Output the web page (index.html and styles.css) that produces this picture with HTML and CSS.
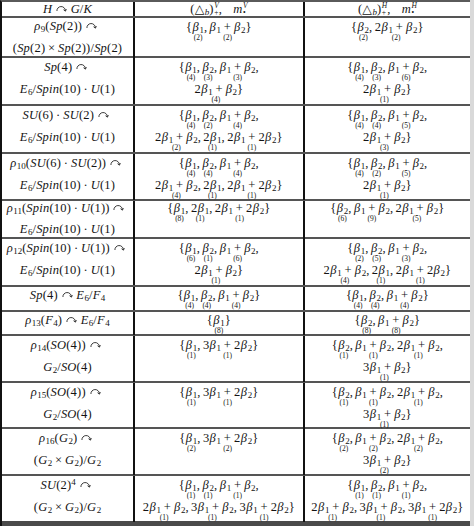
FILE: index.html
```html
<!DOCTYPE html>
<html lang="en">
<head>
<meta charset="utf-8">
<title>Table</title>
<link rel="stylesheet" href="styles.css">
</head>
<body>
<div class="tbl">

<div class="row h16">
  <div class="cell hd"><span class="e"><i>H</i><svg class="arr" viewBox="0 0 12 7"><path d="M1 6.5 A4.6 4.6 0 0 1 10.2 6"/><path d="M8.2 5.1 L10.3 6.7 L11.3 4.4"/></svg><i>G</i>/<i>K</i></span></div>
  <div class="cell hd c2"><span class="e">(△<sub><i>b</i></sub>)<span class="ss"><span class="sp"><i>V</i></span><span class="sb">+</span></span>,<span class="quad"></span><i>m</i><span class="ss"><span class="sp"><i>V</i></span><span class="sb">•</span></span></span></div>
  <div class="cell hd c3"><span class="e">(△<sub><i>b</i></sub>)<span class="ss"><span class="sp"><i>H</i></span><span class="sb">+</span></span>,<span class="quad"></span><i>m</i><span class="ss"><span class="sp"><i>H</i></span><span class="sb">•</span></span></span></div>
</div>

<!-- rho9 -->
<div class="row h40 short">
  <div class="cell">
    <div class="l"><span class="e"><i>ρ</i><sub>9</sub>(<i>Sp</i>(2))<svg class="arr" viewBox="0 0 12 7"><path d="M1 6.5 A4.6 4.6 0 0 1 10.2 6"/><path d="M8.2 5.1 L10.3 6.7 L11.3 4.4"/></svg></span></div>
    <div class="l"><span class="e">(<i>Sp</i>(2)<span class="b">×</span><i>Sp</i>(2))/<i>Sp</i>(2)</span></div>
  </div>
  <div class="cell c2">
    <div class="l"><span class="p">{</span><span class="u"><span class="e"><i>β</i><sub>1</sub></span><span class="m">(2)</span></span><span class="p c">,</span><span class="u"><span class="e"><i>β</i><sub>1</sub><span class="b">+</span><i>β</i><sub>2</sub></span><span class="m">(2)</span></span><span class="p">}</span></div>
  </div>
  <div class="cell c3">
    <div class="l"><span class="p">{</span><span class="u"><span class="e"><i>β</i><sub>2</sub></span><span class="m">(2)</span></span><span class="p c">,</span><span class="u"><span class="e">2<i>β</i><sub>1</sub><span class="b">+</span><i>β</i><sub>2</sub></span><span class="m">(2)</span></span><span class="p">}</span></div>
  </div>
</div>

<!-- Sp(4) -->
<div class="row h48">
  <div class="cell">
    <div class="l"><span class="e"><i>Sp</i>(4)<svg class="arr" viewBox="0 0 12 7"><path d="M1 6.5 A4.6 4.6 0 0 1 10.2 6"/><path d="M8.2 5.1 L10.3 6.7 L11.3 4.4"/></svg></span></div>
    <div class="l"><span class="e"><i>E</i><sub>6</sub>/<i>Spin</i>(10)<span class="b">·</span><i>U</i>(1)</span></div>
  </div>
  <div class="cell c2">
    <div class="l"><span class="p">{</span><span class="u"><span class="e"><i>β</i><sub>1</sub></span><span class="m">(4)</span></span><span class="p c">,</span><span class="u"><span class="e"><i>β</i><sub>2</sub></span><span class="m">(3)</span></span><span class="p c">,</span><span class="u"><span class="e"><i>β</i><sub>1</sub><span class="b">+</span><i>β</i><sub>2</sub></span><span class="m">(3)</span></span><span class="p">,</span></div>
    <div class="l"><span class="u"><span class="e">2<i>β</i><sub>1</sub><span class="b">+</span><i>β</i><sub>2</sub></span><span class="m">(4)</span></span><span class="p">}</span></div>
  </div>
  <div class="cell c3">
    <div class="l"><span class="p">{</span><span class="u"><span class="e"><i>β</i><sub>1</sub></span><span class="m">(4)</span></span><span class="p c">,</span><span class="u"><span class="e"><i>β</i><sub>2</sub></span><span class="m">(3)</span></span><span class="p c">,</span><span class="u"><span class="e"><i>β</i><sub>1</sub><span class="b">+</span><i>β</i><sub>2</sub></span><span class="m">(6)</span></span><span class="p">,</span></div>
    <div class="l"><span class="u"><span class="e">2<i>β</i><sub>1</sub><span class="b">+</span><i>β</i><sub>2</sub></span><span class="m">(1)</span></span><span class="p">}</span></div>
  </div>
</div>

<!-- SU(6)SU(2) -->
<div class="row h48">
  <div class="cell">
    <div class="l"><span class="e"><i>SU</i>(6)<span class="b">·</span><i>SU</i>(2)<svg class="arr" viewBox="0 0 12 7"><path d="M1 6.5 A4.6 4.6 0 0 1 10.2 6"/><path d="M8.2 5.1 L10.3 6.7 L11.3 4.4"/></svg></span></div>
    <div class="l"><span class="e"><i>E</i><sub>6</sub>/<i>Spin</i>(10)<span class="b">·</span><i>U</i>(1)</span></div>
  </div>
  <div class="cell c2">
    <div class="l"><span class="p">{</span><span class="u"><span class="e"><i>β</i><sub>1</sub></span><span class="m">(4)</span></span><span class="p c">,</span><span class="u"><span class="e"><i>β</i><sub>2</sub></span><span class="m">(2)</span></span><span class="p c">,</span><span class="u"><span class="e"><i>β</i><sub>1</sub><span class="b">+</span><i>β</i><sub>2</sub></span><span class="m">(4)</span></span><span class="p">,</span></div>
    <div class="l"><span class="u"><span class="e">2<i>β</i><sub>1</sub><span class="b">+</span><i>β</i><sub>2</sub></span><span class="m">(2)</span></span><span class="p c">,</span><span class="u"><span class="e">2<i>β</i><sub>1</sub></span><span class="m">(1)</span></span><span class="p c">,</span><span class="u"><span class="e">2<i>β</i><sub>1</sub><span class="b">+</span>2<i>β</i><sub>2</sub></span><span class="m">(1)</span></span><span class="p">}</span></div>
  </div>
  <div class="cell c3">
    <div class="l"><span class="p">{</span><span class="u"><span class="e"><i>β</i><sub>1</sub></span><span class="m">(4)</span></span><span class="p c">,</span><span class="u"><span class="e"><i>β</i><sub>2</sub></span><span class="m">(4)</span></span><span class="p c">,</span><span class="u"><span class="e"><i>β</i><sub>1</sub><span class="b">+</span><i>β</i><sub>2</sub></span><span class="m">(5)</span></span><span class="p">,</span></div>
    <div class="l"><span class="u"><span class="e">2<i>β</i><sub>1</sub><span class="b">+</span><i>β</i><sub>2</sub></span><span class="m">(3)</span></span><span class="p">}</span></div>
  </div>
</div>

<!-- rho10 -->
<div class="row h47">
  <div class="cell">
    <div class="l"><span class="e"><i>ρ</i><sub>10</sub>(<i>SU</i>(6)<span class="b">·</span><i>SU</i>(2))<svg class="arr" viewBox="0 0 12 7"><path d="M1 6.5 A4.6 4.6 0 0 1 10.2 6"/><path d="M8.2 5.1 L10.3 6.7 L11.3 4.4"/></svg></span></div>
    <div class="l"><span class="e"><i>E</i><sub>6</sub>/<i>Spin</i>(10)<span class="b">·</span><i>U</i>(1)</span></div>
  </div>
  <div class="cell c2">
    <div class="l"><span class="p">{</span><span class="u"><span class="e"><i>β</i><sub>1</sub></span><span class="m">(4)</span></span><span class="p c">,</span><span class="u"><span class="e"><i>β</i><sub>2</sub></span><span class="m">(4)</span></span><span class="p c">,</span><span class="u"><span class="e"><i>β</i><sub>1</sub><span class="b">+</span><i>β</i><sub>2</sub></span><span class="m">(4)</span></span><span class="p">,</span></div>
    <div class="l"><span class="u"><span class="e">2<i>β</i><sub>1</sub><span class="b">+</span><i>β</i><sub>2</sub></span><span class="m">(4)</span></span><span class="p c">,</span><span class="u"><span class="e">2<i>β</i><sub>1</sub></span><span class="m">(1)</span></span><span class="p c">,</span><span class="u"><span class="e">2<i>β</i><sub>1</sub><span class="b">+</span>2<i>β</i><sub>2</sub></span><span class="m">(1)</span></span><span class="p">}</span></div>
  </div>
  <div class="cell c3">
    <div class="l"><span class="p">{</span><span class="u"><span class="e"><i>β</i><sub>1</sub></span><span class="m">(4)</span></span><span class="p c">,</span><span class="u"><span class="e"><i>β</i><sub>2</sub></span><span class="m">(2)</span></span><span class="p c">,</span><span class="u"><span class="e"><i>β</i><sub>1</sub><span class="b">+</span><i>β</i><sub>2</sub></span><span class="m">(5)</span></span><span class="p">,</span></div>
    <div class="l"><span class="u"><span class="e">2<i>β</i><sub>1</sub><span class="b">+</span><i>β</i><sub>2</sub></span><span class="m">(1)</span></span><span class="p">}</span></div>
  </div>
</div>

<!-- rho11 -->
<div class="row h38 short2">
  <div class="cell">
    <div class="l"><span class="e"><i>ρ</i><sub>11</sub>(<i>Spin</i>(10)<span class="b">·</span><i>U</i>(1))<svg class="arr" viewBox="0 0 12 7"><path d="M1 6.5 A4.6 4.6 0 0 1 10.2 6"/><path d="M8.2 5.1 L10.3 6.7 L11.3 4.4"/></svg></span></div>
    <div class="l"><span class="e"><i>E</i><sub>6</sub>/<i>Spin</i>(10)<span class="b">·</span><i>U</i>(1)</span></div>
  </div>
  <div class="cell c2">
    <div class="l"><span class="p">{</span><span class="u"><span class="e"><i>β</i><sub>1</sub></span><span class="m">(8)</span></span><span class="p c">,</span><span class="u"><span class="e">2<i>β</i><sub>1</sub></span><span class="m">(1)</span></span><span class="p c">,</span><span class="u"><span class="e">2<i>β</i><sub>1</sub><span class="b">+</span>2<i>β</i><sub>2</sub></span><span class="m">(1)</span></span><span class="p">}</span></div>
  </div>
  <div class="cell c3">
    <div class="l"><span class="p">{</span><span class="u"><span class="e"><i>β</i><sub>2</sub></span><span class="m">(6)</span></span><span class="p c">,</span><span class="u"><span class="e"><i>β</i><sub>1</sub><span class="b">+</span><i>β</i><sub>2</sub></span><span class="m">(9)</span></span><span class="p c">,</span><span class="u"><span class="e">2<i>β</i><sub>1</sub><span class="b">+</span><i>β</i><sub>2</sub></span><span class="m">(5)</span></span><span class="p">}</span></div>
  </div>
</div>

<!-- rho12 -->
<div class="row h48">
  <div class="cell">
    <div class="l"><span class="e"><i>ρ</i><sub>12</sub>(<i>Spin</i>(10)<span class="b">·</span><i>U</i>(1))<svg class="arr" viewBox="0 0 12 7"><path d="M1 6.5 A4.6 4.6 0 0 1 10.2 6"/><path d="M8.2 5.1 L10.3 6.7 L11.3 4.4"/></svg></span></div>
    <div class="l"><span class="e"><i>E</i><sub>6</sub>/<i>Spin</i>(10)<span class="b">·</span><i>U</i>(1)</span></div>
  </div>
  <div class="cell c2">
    <div class="l"><span class="p">{</span><span class="u"><span class="e"><i>β</i><sub>1</sub></span><span class="m">(6)</span></span><span class="p c">,</span><span class="u"><span class="e"><i>β</i><sub>2</sub></span><span class="m">(1)</span></span><span class="p c">,</span><span class="u"><span class="e"><i>β</i><sub>1</sub><span class="b">+</span><i>β</i><sub>2</sub></span><span class="m">(6)</span></span><span class="p">,</span></div>
    <div class="l"><span class="u"><span class="e">2<i>β</i><sub>1</sub><span class="b">+</span><i>β</i><sub>2</sub></span><span class="m">(1)</span></span><span class="p">}</span></div>
  </div>
  <div class="cell c3">
    <div class="l"><span class="p">{</span><span class="u"><span class="e"><i>β</i><sub>1</sub></span><span class="m">(2)</span></span><span class="p c">,</span><span class="u"><span class="e"><i>β</i><sub>2</sub></span><span class="m">(5)</span></span><span class="p c">,</span><span class="u"><span class="e"><i>β</i><sub>1</sub><span class="b">+</span><i>β</i><sub>2</sub></span><span class="m">(3)</span></span><span class="p">,</span></div>
    <div class="l"><span class="u"><span class="e">2<i>β</i><sub>1</sub><span class="b">+</span><i>β</i><sub>2</sub></span><span class="m">(4)</span></span><span class="p c">,</span><span class="u"><span class="e">2<i>β</i><sub>1</sub></span><span class="m">(1)</span></span><span class="p c">,</span><span class="u"><span class="e">2<i>β</i><sub>1</sub><span class="b">+</span>2<i>β</i><sub>2</sub></span><span class="m">(1)</span></span><span class="p">}</span></div>
  </div>
</div>

<!-- Sp(4) E6/F4 -->
<div class="row h25 tight">
  <div class="cell">
    <div class="l"><span class="e"><i>Sp</i>(4)<svg class="arr" viewBox="0 0 12 7"><path d="M1 6.5 A4.6 4.6 0 0 1 10.2 6"/><path d="M8.2 5.1 L10.3 6.7 L11.3 4.4"/></svg><i>E</i><sub>6</sub>/<i>F</i><sub>4</sub></span></div>
  </div>
  <div class="cell c2">
    <div class="l"><span class="p">{</span><span class="u"><span class="e"><i>β</i><sub>1</sub></span><span class="m">(4)</span></span><span class="p c">,</span><span class="u"><span class="e"><i>β</i><sub>2</sub></span><span class="m">(4)</span></span><span class="p c">,</span><span class="u"><span class="e"><i>β</i><sub>1</sub><span class="b">+</span><i>β</i><sub>2</sub></span><span class="m">(4)</span></span><span class="p">}</span></div>
  </div>
  <div class="cell c3">
    <div class="l"><span class="p">{</span><span class="u"><span class="e"><i>β</i><sub>1</sub></span><span class="m">(4)</span></span><span class="p c">,</span><span class="u"><span class="e"><i>β</i><sub>2</sub></span><span class="m">(4)</span></span><span class="p c">,</span><span class="u"><span class="e"><i>β</i><sub>1</sub><span class="b">+</span><i>β</i><sub>2</sub></span><span class="m">(4)</span></span><span class="p">}</span></div>
  </div>
</div>

<!-- rho13 -->
<div class="row h24 tight">
  <div class="cell">
    <div class="l"><span class="e"><i>ρ</i><sub>13</sub>(<i>F</i><sub>4</sub>)<svg class="arr" viewBox="0 0 12 7"><path d="M1 6.5 A4.6 4.6 0 0 1 10.2 6"/><path d="M8.2 5.1 L10.3 6.7 L11.3 4.4"/></svg><i>E</i><sub>6</sub>/<i>F</i><sub>4</sub></span></div>
  </div>
  <div class="cell c2">
    <div class="l"><span class="p">{</span><span class="u"><span class="e"><i>β</i><sub>1</sub></span><span class="m">(8)</span></span><span class="p">}</span></div>
  </div>
  <div class="cell c3">
    <div class="l"><span class="p">{</span><span class="u"><span class="e"><i>β</i><sub>2</sub></span><span class="m">(8)</span></span><span class="p c">,</span><span class="u"><span class="e"><i>β</i><sub>1</sub><span class="b">+</span><i>β</i><sub>2</sub></span><span class="m">(8)</span></span><span class="p">}</span></div>
  </div>
</div>

<!-- rho14 -->
<div class="row h47">
  <div class="cell">
    <div class="l"><span class="e"><i>ρ</i><sub>14</sub>(<i>SO</i>(4))<svg class="arr" viewBox="0 0 12 7"><path d="M1 6.5 A4.6 4.6 0 0 1 10.2 6"/><path d="M8.2 5.1 L10.3 6.7 L11.3 4.4"/></svg></span></div>
    <div class="l"><span class="e"><i>G</i><sub>2</sub>/<i>SO</i>(4)</span></div>
  </div>
  <div class="cell c2">
    <div class="l"><span class="p">{</span><span class="u"><span class="e"><i>β</i><sub>1</sub></span><span class="m">(1)</span></span><span class="p c">,</span><span class="u"><span class="e">3<i>β</i><sub>1</sub><span class="b">+</span>2<i>β</i><sub>2</sub></span><span class="m">(1)</span></span><span class="p">}</span></div>
  </div>
  <div class="cell c3">
    <div class="l"><span class="p">{</span><span class="u"><span class="e"><i>β</i><sub>2</sub></span><span class="m">(1)</span></span><span class="p c">,</span><span class="u"><span class="e"><i>β</i><sub>1</sub><span class="b">+</span><i>β</i><sub>2</sub></span><span class="m">(1)</span></span><span class="p c">,</span><span class="u"><span class="e">2<i>β</i><sub>1</sub><span class="b">+</span><i>β</i><sub>2</sub></span><span class="m">(1)</span></span><span class="p">,</span></div>
    <div class="l"><span class="u"><span class="e">3<i>β</i><sub>1</sub><span class="b">+</span><i>β</i><sub>2</sub></span><span class="m">(1)</span></span><span class="p">}</span></div>
  </div>
</div>

<!-- rho15 -->
<div class="row h46">
  <div class="cell">
    <div class="l"><span class="e"><i>ρ</i><sub>15</sub>(<i>SO</i>(4))<svg class="arr" viewBox="0 0 12 7"><path d="M1 6.5 A4.6 4.6 0 0 1 10.2 6"/><path d="M8.2 5.1 L10.3 6.7 L11.3 4.4"/></svg></span></div>
    <div class="l"><span class="e"><i>G</i><sub>2</sub>/<i>SO</i>(4)</span></div>
  </div>
  <div class="cell c2">
    <div class="l"><span class="p">{</span><span class="u"><span class="e"><i>β</i><sub>1</sub></span><span class="m">(1)</span></span><span class="p c">,</span><span class="u"><span class="e">3<i>β</i><sub>1</sub><span class="b">+</span>2<i>β</i><sub>2</sub></span><span class="m">(1)</span></span><span class="p">}</span></div>
  </div>
  <div class="cell c3">
    <div class="l"><span class="p">{</span><span class="u"><span class="e"><i>β</i><sub>2</sub></span><span class="m">(1)</span></span><span class="p c">,</span><span class="u"><span class="e"><i>β</i><sub>1</sub><span class="b">+</span><i>β</i><sub>2</sub></span><span class="m">(1)</span></span><span class="p c">,</span><span class="u"><span class="e">2<i>β</i><sub>1</sub><span class="b">+</span><i>β</i><sub>2</sub></span><span class="m">(1)</span></span><span class="p">,</span></div>
    <div class="l"><span class="u"><span class="e">3<i>β</i><sub>1</sub><span class="b">+</span><i>β</i><sub>2</sub></span><span class="m">(1)</span></span><span class="p">}</span></div>
  </div>
</div>

<!-- rho16 -->
<div class="row h47">
  <div class="cell">
    <div class="l"><span class="e"><i>ρ</i><sub>16</sub>(<i>G</i><sub>2</sub>)<svg class="arr" viewBox="0 0 12 7"><path d="M1 6.5 A4.6 4.6 0 0 1 10.2 6"/><path d="M8.2 5.1 L10.3 6.7 L11.3 4.4"/></svg></span></div>
    <div class="l"><span class="e">(<i>G</i><sub>2</sub><span class="b">×</span><i>G</i><sub>2</sub>)/<i>G</i><sub>2</sub></span></div>
  </div>
  <div class="cell c2">
    <div class="l"><span class="p">{</span><span class="u"><span class="e"><i>β</i><sub>1</sub></span><span class="m">(2)</span></span><span class="p c">,</span><span class="u"><span class="e">3<i>β</i><sub>1</sub><span class="b">+</span>2<i>β</i><sub>2</sub></span><span class="m">(2)</span></span><span class="p">}</span></div>
  </div>
  <div class="cell c3">
    <div class="l"><span class="p">{</span><span class="u"><span class="e"><i>β</i><sub>2</sub></span><span class="m">(2)</span></span><span class="p c">,</span><span class="u"><span class="e"><i>β</i><sub>1</sub><span class="b">+</span><i>β</i><sub>2</sub></span><span class="m">(2)</span></span><span class="p c">,</span><span class="u"><span class="e">2<i>β</i><sub>1</sub><span class="b">+</span><i>β</i><sub>2</sub></span><span class="m">(2)</span></span><span class="p">,</span></div>
    <div class="l"><span class="u"><span class="e">3<i>β</i><sub>1</sub><span class="b">+</span><i>β</i><sub>2</sub></span><span class="m">(2)</span></span><span class="p">}</span></div>
  </div>
</div>

<!-- SU(2)^4 -->
<div class="row h50 last">
  <div class="cell">
    <div class="l"><span class="e"><i>SU</i>(2)<sup>4</sup><svg class="arr" viewBox="0 0 12 7"><path d="M1 6.5 A4.6 4.6 0 0 1 10.2 6"/><path d="M8.2 5.1 L10.3 6.7 L11.3 4.4"/></svg></span></div>
    <div class="l"><span class="e">(<i>G</i><sub>2</sub><span class="b">×</span><i>G</i><sub>2</sub>)/<i>G</i><sub>2</sub></span></div>
  </div>
  <div class="cell c2">
    <div class="l"><span class="p">{</span><span class="u"><span class="e"><i>β</i><sub>1</sub></span><span class="m">(1)</span></span><span class="p c">,</span><span class="u"><span class="e"><i>β</i><sub>2</sub></span><span class="m">(1)</span></span><span class="p c">,</span><span class="u"><span class="e"><i>β</i><sub>1</sub><span class="b">+</span><i>β</i><sub>2</sub></span><span class="m">(1)</span></span><span class="p">,</span></div>
    <div class="l"><span class="u"><span class="e">2<i>β</i><sub>1</sub><span class="b">+</span><i>β</i><sub>2</sub></span><span class="m">(1)</span></span><span class="p c">,</span><span class="u"><span class="e">3<i>β</i><sub>1</sub><span class="b">+</span><i>β</i><sub>2</sub></span><span class="m">(1)</span></span><span class="p c">,</span><span class="u"><span class="e">3<i>β</i><sub>1</sub><span class="b">+</span>2<i>β</i><sub>2</sub></span><span class="m">(1)</span></span><span class="p">}</span></div>
  </div>
  <div class="cell c3">
    <div class="l"><span class="p">{</span><span class="u"><span class="e"><i>β</i><sub>1</sub></span><span class="m">(1)</span></span><span class="p c">,</span><span class="u"><span class="e"><i>β</i><sub>2</sub></span><span class="m">(1)</span></span><span class="p c">,</span><span class="u"><span class="e"><i>β</i><sub>1</sub><span class="b">+</span><i>β</i><sub>2</sub></span><span class="m">(1)</span></span><span class="p">,</span></div>
    <div class="l"><span class="u"><span class="e">2<i>β</i><sub>1</sub><span class="b">+</span><i>β</i><sub>2</sub></span><span class="m">(1)</span></span><span class="p c">,</span><span class="u"><span class="e">3<i>β</i><sub>1</sub><span class="b">+</span><i>β</i><sub>2</sub></span><span class="m">(1)</span></span><span class="p c">,</span><span class="u"><span class="e">3<i>β</i><sub>1</sub><span class="b">+</span>2<i>β</i><sub>2</sub></span><span class="m">(1)</span></span><span class="p">}</span></div>
  </div>
</div>

</div>
</body>
</html>
```

FILE: styles.css
```css
html, body {
  margin: 0;
  padding: 0;
}
body {
  background: #d9d9d9;
  font-family: "Liberation Serif", "DejaVu Serif", serif;
  font-size: 12.5px;
  color: #141414;
  letter-spacing: 0.2px;
}
.tbl {
  box-sizing: border-box;
  width: 470px;
  height: 526px;
  background: #fff;
  border-top: 2px solid #5a5a5a;
  border-left: 2px solid #111;
}
.row {
  box-sizing: border-box;
  display: grid;
  grid-template-columns: 131px 170px 167px;
  border-bottom: 2px solid #555;
}
.row.last {
  border-bottom: 5px solid #4a4a4a;
}
.h16 { height: 16px; }
.h24 { height: 24px; }
.h25 { height: 25px; }
.h38 { height: 38px; }
.h40 { height: 40px; }
.h46 { height: 46px; }
.h47 { height: 47px; }
.h48 { height: 48px; }
.h50 { height: 50px; }

.cell {
  padding-top: 2px;
  overflow: visible;
}
.tight .cell {
  padding-top: 1px;
}
.short .cell:first-child {
  padding-top: 1px;
}
.short2 .cell {
  padding-top: 0;
}
.short2 .cell:first-child .l {
  height: 21px;
}
.c2, .c3 {
  border-left: 2px solid #111;
}
.c2 .l, .c3 .l {
  letter-spacing: 0.45px;
}
.hd {
  padding-top: 0;
  display: flex;
  justify-content: center;
  line-height: 14px;
  white-space: nowrap;
}
.l {
  height: 22px;
  display: flex;
  justify-content: center;
  align-items: flex-start;
  white-space: nowrap;
}
.e, .p {
  line-height: 14px;
  white-space: nowrap;
}
.u {
  display: flex;
  flex-direction: column;
  align-items: center;
}
.m {
  font-size: 7.5px;
  line-height: 8px;
  letter-spacing: 0;
}
.c {
  margin-right: 0.17em;
}
.b {
  margin: 0 0.22em;
}
i {
  font-style: italic;
}
sub {
  font-size: 0.72em;
  vertical-align: -0.25em;
  line-height: 0;
  letter-spacing: 0;
  padding-left: 0.3px;
}
sup {
  font-size: 0.72em;
  vertical-align: 0.5em;
  line-height: 0;
}
.arr {
  width: 11px;
  height: 6.5px;
  margin: 0 0.3em;
  vertical-align: 0.12em;
  fill: none;
  stroke: #141414;
  stroke-width: 0.9;
}
.ss {
  display: inline-flex;
  flex-direction: column;
  font-size: 0.6em;
  vertical-align: 5px;
  letter-spacing: 0;
  margin-left: 0.5px;
}
.sp, .sb {
  display: block;
  height: 7px;
  line-height: 7px;
}
.quad {
  display: inline-block;
  width: 0.9em;
}
```
